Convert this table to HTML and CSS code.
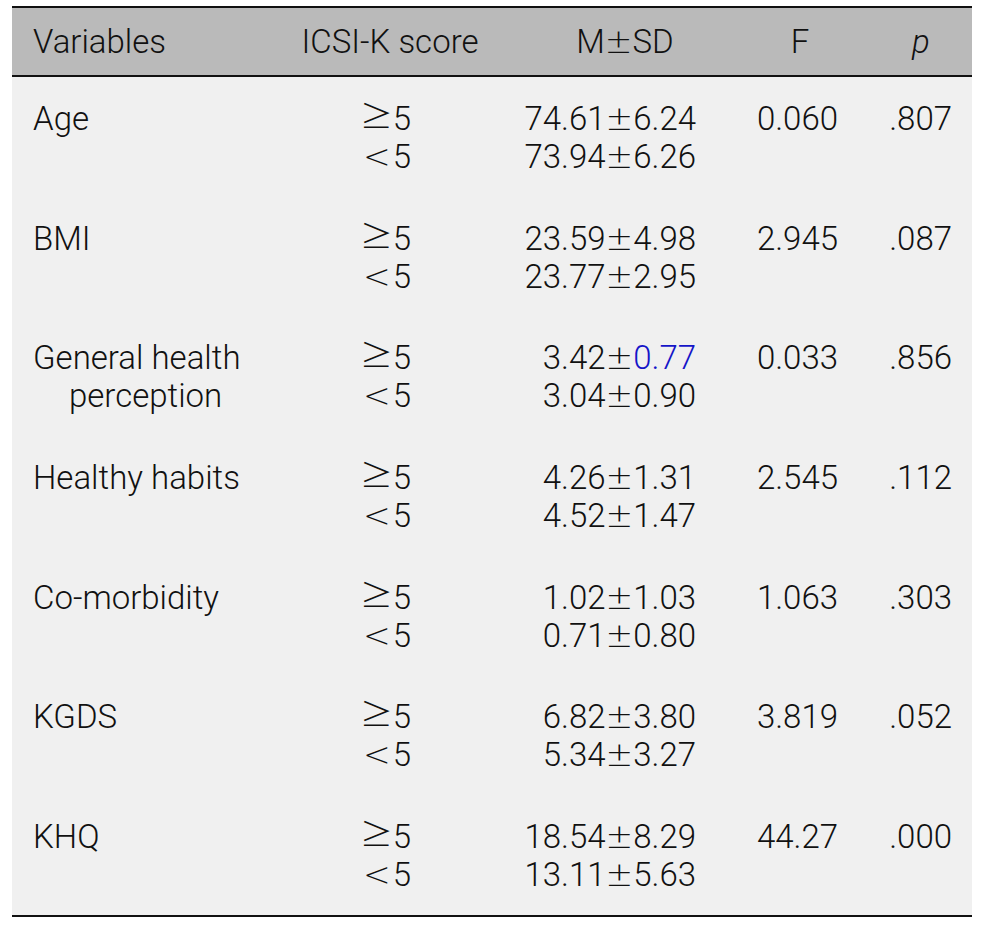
FILE: index.html
```html
<!DOCTYPE html>
<html lang="en">
<head>
<meta charset="utf-8">
<title>ICSI-K score comparison</title>
<link rel="stylesheet" href="styles.css">
</head>
<body>
<table class="stats">
  <colgroup>
    <col class="c-var"><col class="c-score"><col class="c-msd"><col class="c-f"><col class="c-p">
  </colgroup>
  <thead>
    <tr>
      <th class="var">Variables</th>
      <th class="score">ICSI-K score</th>
      <th class="msd">M<span class="pm">±</span>SD</th>
      <th class="f">F</th>
      <th class="p"><i>p</i></th>
    </tr>
  </thead>
  <tbody>
    <tr>
      <td class="var">Age</td>
      <td class="score"><span class="ge">≥</span>5<br><span class="lt">&lt;</span>5</td>
      <td class="msd">74.61<span class="pm">±</span>6.24<br>73.94<span class="pm">±</span>6.26</td>
      <td class="f">0.060</td>
      <td class="p">.807</td>
    </tr>
    <tr>
      <td class="var">BMI</td>
      <td class="score"><span class="ge">≥</span>5<br><span class="lt">&lt;</span>5</td>
      <td class="msd">23.59<span class="pm">±</span>4.98<br>23.77<span class="pm">±</span>2.95</td>
      <td class="f">2.945</td>
      <td class="p">.087</td>
    </tr>
    <tr>
      <td class="var">General health<span class="wrap">perception</span></td>
      <td class="score"><span class="ge">≥</span>5<br><span class="lt">&lt;</span>5</td>
      <td class="msd">3.42<span class="pm">±</span><span class="hl">0.77</span><br>3.04<span class="pm">±</span>0.90</td>
      <td class="f">0.033</td>
      <td class="p">.856</td>
    </tr>
    <tr>
      <td class="var">Healthy habits</td>
      <td class="score"><span class="ge">≥</span>5<br><span class="lt">&lt;</span>5</td>
      <td class="msd">4.26<span class="pm">±</span>1.31<br>4.52<span class="pm">±</span>1.47</td>
      <td class="f">2.545</td>
      <td class="p">.112</td>
    </tr>
    <tr>
      <td class="var">Co-morbidity</td>
      <td class="score"><span class="ge">≥</span>5<br><span class="lt">&lt;</span>5</td>
      <td class="msd">1.02<span class="pm">±</span>1.03<br>0.71<span class="pm">±</span>0.80</td>
      <td class="f">1.063</td>
      <td class="p">.303</td>
    </tr>
    <tr>
      <td class="var">KGDS</td>
      <td class="score"><span class="ge">≥</span>5<br><span class="lt">&lt;</span>5</td>
      <td class="msd">6.82<span class="pm">±</span>3.80<br>5.34<span class="pm">±</span>3.27</td>
      <td class="f">3.819</td>
      <td class="p">.052</td>
    </tr>
    <tr>
      <td class="var">KHQ</td>
      <td class="score"><span class="ge">≥</span>5<br><span class="lt">&lt;</span>5</td>
      <td class="msd">18.54<span class="pm">±</span>8.29<br>13.11<span class="pm">±</span>5.63</td>
      <td class="f">44.27</td>
      <td class="p">.000</td>
    </tr>
  </tbody>
</table>
</body>
</html>
```
FILE: styles.css
```css
html, body {
  margin: 0;
  padding: 0;
  background: #ffffff;
}

body {
  padding: 6px 0 0 12px;
  font-family: Roboto, "Liberation Sans", "Noto Sans CJK KR", sans-serif;
  font-weight: 300;
  color: #111111;
}

.stats {
  width: 960px;
  table-layout: fixed;
  border-collapse: collapse;
  font-size: 33px;
  line-height: 38px;
  border-top: 2px solid #111111;
  border-bottom: 2px solid #111111;
}

.c-var { width: 283px; }
.c-score { width: 190px; }
.c-msd { width: 245px; }
.c-f { width: 140px; }
.c-p { width: 102px; }

.stats thead tr {
  background: #bababa;
  border-bottom: 2px solid #111111;
}

.stats th {
  font-weight: 300;
  height: 67px;
  padding: 0;
  text-align: center;
  vertical-align: middle;
}

.stats th.var {
  text-align: left;
  padding-left: 21px;
}

.stats th.msd {
  padding-left: 35px;
}

.stats th.p i {
  font-style: italic;
}

.stats tbody {
  background: #f0f0f0;
}

.stats td {
  padding: 23px 0 20.7px;
  vertical-align: top;
  text-align: right;
  white-space: nowrap;
}

.stats td.var {
  text-align: left;
  padding-left: 21px;
}

.wrap {
  display: block;
  padding-left: 36px;
}

.stats td.score { padding-right: 74px; }
.stats td.msd { padding-right: 34px; }
.stats td.f { padding-right: 32px; }
.stats td.p { padding-right: 20px; }

.lt,
.pm {
  font-family: "DejaVu Sans", sans-serif;
  font-weight: 200;
}

.lt {
  margin-right: 2px;
}

.ge {
  display: inline-block;
  width: 1em;
  line-height: 24px;
  vertical-align: 1px;
  text-align: center;
  font-family: "Noto Sans CJK KR", "DejaVu Sans", sans-serif;
  font-weight: 300;
}

.hl {
  color: #1414c8;
}
```
